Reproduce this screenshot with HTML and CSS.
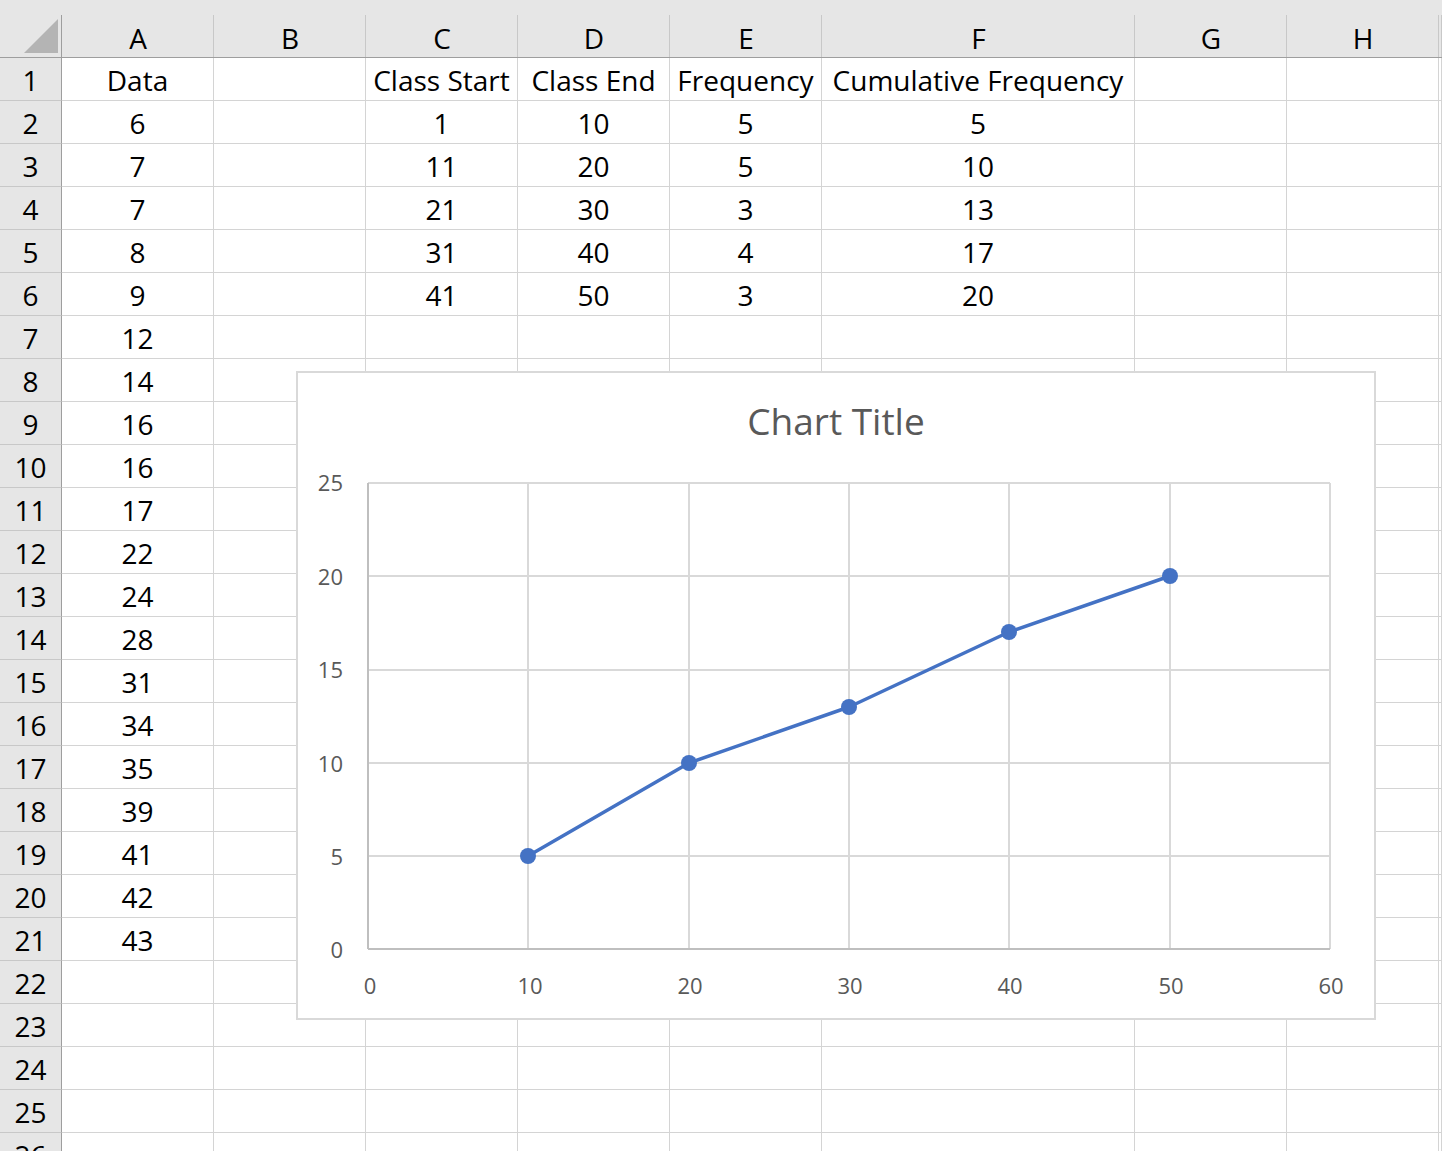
FILE: index.html
```html
<!DOCTYPE html>
<html lang="en">
<head>
  <meta charset="UTF-8" />
  <title>Cumulative Frequency - Sheet1</title>
  <link rel="stylesheet" href="styles.css">
</head>
<body>
  <div class="sheet">
    <!-- kolomkoppen -->
    <div class="hd corner">
      <svg width="36" height="36" viewBox="0 0 36 36"><polygon points="1,34 35,0 35,34" fill="#b4b4b4"/></svg>
    </div>
    <div class="hd">A</div><div class="hd">B</div><div class="hd">C</div><div class="hd">D</div>
    <div class="hd">E</div><div class="hd">F</div><div class="hd">G</div><div class="hd">H</div><div class="hd"></div>

    <div class="rn">1</div><div class="c">Data</div><div class="c"></div><div class="c">Class Start</div><div class="c">Class End</div><div class="c">Frequency</div><div class="c">Cumulative Frequency</div><div class="c"></div><div class="c"></div><div class="c"></div>
    <div class="rn">2</div><div class="c">6</div><div class="c"></div><div class="c">1</div><div class="c">10</div><div class="c">5</div><div class="c">5</div><div class="c"></div><div class="c"></div><div class="c"></div>
    <div class="rn">3</div><div class="c">7</div><div class="c"></div><div class="c">11</div><div class="c">20</div><div class="c">5</div><div class="c">10</div><div class="c"></div><div class="c"></div><div class="c"></div>
    <div class="rn">4</div><div class="c">7</div><div class="c"></div><div class="c">21</div><div class="c">30</div><div class="c">3</div><div class="c">13</div><div class="c"></div><div class="c"></div><div class="c"></div>
    <div class="rn">5</div><div class="c">8</div><div class="c"></div><div class="c">31</div><div class="c">40</div><div class="c">4</div><div class="c">17</div><div class="c"></div><div class="c"></div><div class="c"></div>
    <div class="rn">6</div><div class="c">9</div><div class="c"></div><div class="c">41</div><div class="c">50</div><div class="c">3</div><div class="c">20</div><div class="c"></div><div class="c"></div><div class="c"></div>
    <div class="rn">7</div><div class="c">12</div><div class="c"></div><div class="c"></div><div class="c"></div><div class="c"></div><div class="c"></div><div class="c"></div><div class="c"></div><div class="c"></div>
    <div class="rn">8</div><div class="c">14</div><div class="c"></div><div class="c"></div><div class="c"></div><div class="c"></div><div class="c"></div><div class="c"></div><div class="c"></div><div class="c"></div>
    <div class="rn">9</div><div class="c">16</div><div class="c"></div><div class="c"></div><div class="c"></div><div class="c"></div><div class="c"></div><div class="c"></div><div class="c"></div><div class="c"></div>
    <div class="rn">10</div><div class="c">16</div><div class="c"></div><div class="c"></div><div class="c"></div><div class="c"></div><div class="c"></div><div class="c"></div><div class="c"></div><div class="c"></div>
    <div class="rn">11</div><div class="c">17</div><div class="c"></div><div class="c"></div><div class="c"></div><div class="c"></div><div class="c"></div><div class="c"></div><div class="c"></div><div class="c"></div>
    <div class="rn">12</div><div class="c">22</div><div class="c"></div><div class="c"></div><div class="c"></div><div class="c"></div><div class="c"></div><div class="c"></div><div class="c"></div><div class="c"></div>
    <div class="rn">13</div><div class="c">24</div><div class="c"></div><div class="c"></div><div class="c"></div><div class="c"></div><div class="c"></div><div class="c"></div><div class="c"></div><div class="c"></div>
    <div class="rn">14</div><div class="c">28</div><div class="c"></div><div class="c"></div><div class="c"></div><div class="c"></div><div class="c"></div><div class="c"></div><div class="c"></div><div class="c"></div>
    <div class="rn">15</div><div class="c">31</div><div class="c"></div><div class="c"></div><div class="c"></div><div class="c"></div><div class="c"></div><div class="c"></div><div class="c"></div><div class="c"></div>
    <div class="rn">16</div><div class="c">34</div><div class="c"></div><div class="c"></div><div class="c"></div><div class="c"></div><div class="c"></div><div class="c"></div><div class="c"></div><div class="c"></div>
    <div class="rn">17</div><div class="c">35</div><div class="c"></div><div class="c"></div><div class="c"></div><div class="c"></div><div class="c"></div><div class="c"></div><div class="c"></div><div class="c"></div>
    <div class="rn">18</div><div class="c">39</div><div class="c"></div><div class="c"></div><div class="c"></div><div class="c"></div><div class="c"></div><div class="c"></div><div class="c"></div><div class="c"></div>
    <div class="rn">19</div><div class="c">41</div><div class="c"></div><div class="c"></div><div class="c"></div><div class="c"></div><div class="c"></div><div class="c"></div><div class="c"></div><div class="c"></div>
    <div class="rn">20</div><div class="c">42</div><div class="c"></div><div class="c"></div><div class="c"></div><div class="c"></div><div class="c"></div><div class="c"></div><div class="c"></div><div class="c"></div>
    <div class="rn">21</div><div class="c">43</div><div class="c"></div><div class="c"></div><div class="c"></div><div class="c"></div><div class="c"></div><div class="c"></div><div class="c"></div><div class="c"></div>
    <div class="rn">22</div><div class="c"></div><div class="c"></div><div class="c"></div><div class="c"></div><div class="c"></div><div class="c"></div><div class="c"></div><div class="c"></div><div class="c"></div>
    <div class="rn">23</div><div class="c"></div><div class="c"></div><div class="c"></div><div class="c"></div><div class="c"></div><div class="c"></div><div class="c"></div><div class="c"></div><div class="c"></div>
    <div class="rn">24</div><div class="c"></div><div class="c"></div><div class="c"></div><div class="c"></div><div class="c"></div><div class="c"></div><div class="c"></div><div class="c"></div><div class="c"></div>
    <div class="rn">25</div><div class="c"></div><div class="c"></div><div class="c"></div><div class="c"></div><div class="c"></div><div class="c"></div><div class="c"></div><div class="c"></div><div class="c"></div>
    <div class="rn">26</div><div class="c"></div><div class="c"></div><div class="c"></div><div class="c"></div><div class="c"></div><div class="c"></div><div class="c"></div><div class="c"></div><div class="c"></div>

    <!-- grafiek ligt over de cellen -->
    <div class="chart">
      <svg width="1076" height="645" viewBox="0 0 1076 645">
        <text class="title" x="538" y="62" text-anchor="middle">Chart Title</text>

        <g stroke="#d9d9d9" stroke-width="2">
          <line x1="70" y1="110" x2="1032" y2="110"/>
          <line x1="70" y1="203" x2="1032" y2="203"/>
          <line x1="70" y1="297" x2="1032" y2="297"/>
          <line x1="70" y1="390" x2="1032" y2="390"/>
          <line x1="70" y1="483" x2="1032" y2="483"/>
          <line x1="230" y1="110" x2="230" y2="576"/>
          <line x1="391" y1="110" x2="391" y2="576"/>
          <line x1="551" y1="110" x2="551" y2="576"/>
          <line x1="711" y1="110" x2="711" y2="576"/>
          <line x1="872" y1="110" x2="872" y2="576"/>
          <line x1="1032" y1="110" x2="1032" y2="576"/>
        </g>
        <g stroke="#bfbfbf" stroke-width="2">
          <line x1="70" y1="576" x2="1032" y2="576"/>
          <line x1="70" y1="110" x2="70" y2="576"/>
        </g>

        <g class="tick" text-anchor="end">
          <text x="45" y="118">25</text>
          <text x="45" y="212">20</text>
          <text x="45" y="305">15</text>
          <text x="45" y="399">10</text>
          <text x="45" y="492">5</text>
          <text x="45" y="585">0</text>
        </g>
        <g class="tick" text-anchor="middle">
          <text x="72" y="621">0</text>
          <text x="232" y="621">10</text>
          <text x="392" y="621">20</text>
          <text x="552" y="621">30</text>
          <text x="712" y="621">40</text>
          <text x="873" y="621">50</text>
          <text x="1033" y="621">60</text>
        </g>

        <polyline points="230,483 391,390 551,334 711,259 872,203" fill="none" stroke="#4472c4" stroke-width="3.5" stroke-linejoin="round"/>
        <g fill="#4472c4">
          <circle cx="230" cy="483" r="8"/>
          <circle cx="391" cy="390" r="8"/>
          <circle cx="551" cy="334" r="8"/>
          <circle cx="711" cy="259" r="8"/>
          <circle cx="872" cy="203" r="8"/>
        </g>
      </svg>
    </div>
  </div>
</body>
</html>
```

FILE: styles.css
```css
body {
  margin: 0;
  background: #fff;
  overflow: hidden;
  font-family: 'Open Sans', 'Noto Sans', sans-serif;
  color: #000;
}
.sheet {
  position: relative;
  display: grid;
  grid-template-columns: 62px repeat(5, 152px) 313px 152px 152px 1fr;
  grid-template-rows: 58px;
  grid-auto-rows: 43px;
  width: 1442px;
}
.hd {
  box-sizing: border-box;
  background-color: #e6e6e6;
  background-image: linear-gradient(#c8c8c8, #c8c8c8);
  background-size: 1px 42px;
  background-position: right bottom;
  background-repeat: no-repeat;
  border-bottom: 1px solid #9e9e9e;
  padding-top: 17px;
  font-size: 28px;
  line-height: 42px;
  text-align: center;
}
.hd.corner {
  background-image: linear-gradient(#9e9e9e, #9e9e9e);
  display: flex;
  justify-content: flex-end;
  align-items: flex-start;
  padding: 19px 3px 0 0;
}
.hd.corner svg {
  display: block;
}
.rn {
  box-sizing: border-box;
  background: #e6e6e6;
  border-right: 1px solid #9e9e9e;
  border-bottom: 1px solid #c8c8c8;
  font-size: 28px;
  line-height: 45px;
  text-align: center;
}
.c {
  box-sizing: border-box;
  border-right: 1px solid #d4d4d4;
  border-bottom: 1px solid #d4d4d4;
  font-size: 28px;
  line-height: 45px;
  text-align: center;
  white-space: nowrap;
}
/* grafiek */
.chart {
  position: absolute;
  left: 296px;
  top: 371px;
  width: 1076px;
  height: 645px;
  background: #fff;
  border: 2px solid #d9d9d9;
}
.chart svg {
  display: block;
}
.title {
  font-family: 'Open Sans', 'Noto Sans', sans-serif;
  font-size: 37px;
  fill: #595959;
}
.tick {
  font-family: 'Open Sans', 'Noto Sans', sans-serif;
  font-size: 22px;
  fill: #595959;
}
```
